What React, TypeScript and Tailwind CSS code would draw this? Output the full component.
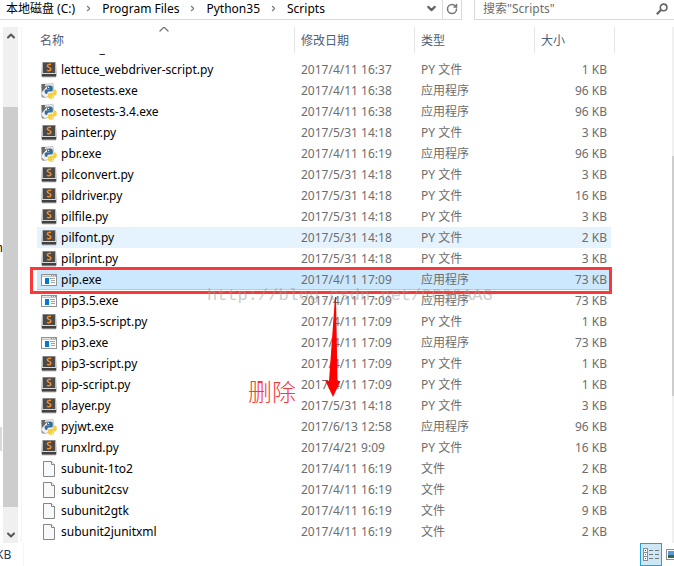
import React from 'react';
import { ChevronDown, ChevronUp, ChevronRight, RotateCw } from 'lucide-react';

type Kind = 'sublime' | 'python' | 'window' | 'blank';

interface FileRow {
  name: string;
  date: string;
  type: string;
  size: string;
  kind: Kind;
}

const files: FileRow[] = [
  { name: 'lettuce_webdriver-script.py', date: '2017/4/11 16:37', type: 'PY 文件', size: '1 KB', kind: 'sublime' },
  { name: 'nosetests.exe', date: '2017/4/11 16:38', type: '应用程序', size: '96 KB', kind: 'python' },
  { name: 'nosetests-3.4.exe', date: '2017/4/11 16:38', type: '应用程序', size: '96 KB', kind: 'python' },
  { name: 'painter.py', date: '2017/5/31 14:18', type: 'PY 文件', size: '3 KB', kind: 'sublime' },
  { name: 'pbr.exe', date: '2017/4/11 16:19', type: '应用程序', size: '96 KB', kind: 'python' },
  { name: 'pilconvert.py', date: '2017/5/31 14:18', type: 'PY 文件', size: '3 KB', kind: 'sublime' },
  { name: 'pildriver.py', date: '2017/5/31 14:18', type: 'PY 文件', size: '16 KB', kind: 'sublime' },
  { name: 'pilfile.py', date: '2017/5/31 14:18', type: 'PY 文件', size: '3 KB', kind: 'sublime' },
  { name: 'pilfont.py', date: '2017/5/31 14:18', type: 'PY 文件', size: '2 KB', kind: 'sublime' },
  { name: 'pilprint.py', date: '2017/5/31 14:18', type: 'PY 文件', size: '3 KB', kind: 'sublime' },
  { name: 'pip.exe', date: '2017/4/11 17:09', type: '应用程序', size: '73 KB', kind: 'window' },
  { name: 'pip3.5.exe', date: '2017/4/11 17:09', type: '应用程序', size: '73 KB', kind: 'window' },
  { name: 'pip3.5-script.py', date: '2017/4/11 17:09', type: 'PY 文件', size: '1 KB', kind: 'sublime' },
  { name: 'pip3.exe', date: '2017/4/11 17:09', type: '应用程序', size: '73 KB', kind: 'window' },
  { name: 'pip3-script.py', date: '2017/4/11 17:09', type: 'PY 文件', size: '1 KB', kind: 'sublime' },
  { name: 'pip-script.py', date: '2017/4/11 17:09', type: 'PY 文件', size: '1 KB', kind: 'sublime' },
  { name: 'player.py', date: '2017/5/31 14:18', type: 'PY 文件', size: '3 KB', kind: 'sublime' },
  { name: 'pyjwt.exe', date: '2017/6/13 12:58', type: '应用程序', size: '96 KB', kind: 'python' },
  { name: 'runxlrd.py', date: '2017/4/21 9:09', type: 'PY 文件', size: '16 KB', kind: 'sublime' },
  { name: 'subunit-1to2', date: '2017/4/11 16:19', type: '文件', size: '2 KB', kind: 'blank' },
  { name: 'subunit2csv', date: '2017/4/11 16:19', type: '文件', size: '2 KB', kind: 'blank' },
  { name: 'subunit2gtk', date: '2017/4/11 16:19', type: '文件', size: '9 KB', kind: 'blank' },
  { name: 'subunit2junitxml', date: '2017/4/11 16:19', type: '文件', size: '2 KB', kind: 'blank' },
];

const FileIcon = ({ kind }: { kind: Kind }) => {
  if (kind === 'sublime') {
    return (
      <svg className="size-4 shrink-0" viewBox="0 0 16 16">
        <path d="M1 0h14l1 14-1.500 1.500h-13L0 14z" fill="#bdbdbd" />
        <path d="M2 0.500h12v10.500H2z" fill="#4a4a4a" />
        <path d="M1 11h14v1H1z" fill="#d8d8d8" />
        <path d="M1 12h14v2.500H1z" fill="#404040" />
        <path d="M10 2.500C8 2 6.300 2.700 6.300 4s3.600 1.400 3.600 2.900S8 9 6 8.400" fill="none" stroke="#f2912f" strokeWidth="1.500" />
      </svg>
    );
  }
  if (kind === 'python') {
    return (
      <svg className="size-4 shrink-0" viewBox="0 0 16 16">
        <path d="M0.500 1.500 12 0.500l1.500 11L4 14.500l-3.500-1z" fill="#f1f1f1" stroke="#c6c6c6" />
        <path d="M0.500 1h4L3.500 3.500 7 2 1 9z" fill="#666" />
        <path d="M1 11.500 4 14.500H1z" fill="#999" />
        <path d="M6 6V4.600C6 3.200 7.200 2.600 8.900 2.600s2.900.6 2.900 2v2.300c0 1.200-.8 1.700-1.800 1.700H8C6.800 8.600 6.200 9.500 6.200 11H5.500C4.200 11 3.600 9.900 3.600 8.500S4.400 6.300 5.600 6.300h3.300V6z" fill="#346f9f" />
        <path d="M12.700 6.600h.8c1.500 0 2.300 1.200 2.300 3s-.9 2.900-2.200 2.900H10.500v.5H13v.9c0 1.300-1.300 1.800-3 1.800s-3-.6-3-1.900v-2.100c0-1.300.9-1.800 1.900-1.800h1.900c1.200 0 1.900-.8 1.900-2z" fill="#f7cf3c" />
        <circle cx="7.500" cy="4.400" r="0.600" fill="#fff" />
        <circle cx="11.400" cy="14.200" r="0.600" fill="#fff" />
      </svg>
    );
  }
  if (kind === 'window') {
    return (
      <svg className="size-4 shrink-0" viewBox="0 0 16 16" shapeRendering="crispEdges">
        <rect x="0" y="2" width="16" height="12" fill="#8f9396" />
        <rect x="1" y="5" width="14" height="8" fill="#fff" />
        <path d="M1 3h14v1H1z" fill="#e4e6e8" />
        <path d="M10 3h1v1h-1zM12 3h1v1h-1zM14 3h1v1h-1z" fill="#8f9396" />
        <path d="M1 4h14v1H1z" fill="#c2c5c8" />
        <rect x="4" y="6" width="4" height="6" fill="#0078d7" />
        <path d="M9 6h5v1H9zM10 8h4v1h-4zM10 10h4v1h-4z" fill="#a2a2a2" />
      </svg>
    );
  }
  return (
    <svg className="size-4 shrink-0" viewBox="0 0 16 16">
      <path d="M2.500 0.500h8l3 3v12h-11z" fill="#f8f9fa" stroke="#868686" />
      <path d="M10.500 0.500v3h3" fill="#fff" stroke="#868686" />
    </svg>
  );
};

const Crumb = ({ label }: { label: string }) => (
  <a href="#" className="whitespace-nowrap text-black">{label}</a>
);

const AddressBar = () => (
  <div className="flex h-5 shrink-0 text-xs">
    <nav className="flex grow items-center gap-[9px] border-b border-[#d9d9d9] pb-0.5 pl-1.5">
      <Crumb label="本地磁盘 (C:)" />
      <ChevronRight size={9} strokeWidth={3} className="text-[#777]" />
      <Crumb label="Program Files" />
      <ChevronRight size={9} strokeWidth={3} className="text-[#777]" />
      <Crumb label="Python35" />
      <ChevronRight size={9} strokeWidth={3} className="text-[#777]" />
      <Crumb label="Scripts" />
      <button aria-label="Previous locations" className="mr-1 ml-auto text-[#666]">
        <ChevronDown size={13} strokeWidth={4} />
      </button>
    </nav>
    <button aria-label="Refresh" className="flex w-5 items-center justify-center border-x border-b border-[#d9d9d9] pb-0.5 text-[#777]">
      <RotateCw size={12} strokeWidth={3} />
    </button>
    <label className="ml-3 flex w-[200px] items-center border-b border-l border-[#d9d9d9] pr-1.5 pb-0.5 pl-2">
      <input aria-label="Search" placeholder={'搜索"Scripts"'} className="min-w-0 grow placeholder:text-[#6d6d6d] outline-none" />
      <svg className="size-3 shrink-0" viewBox="0 0 12 12" fill="none" stroke="#666" strokeWidth="1.600">
        <circle cx="7.600" cy="4.400" r="3.300" />
        <path d="M5.200 6.800 0.800 11.200" strokeWidth="2.200" />
      </svg>
    </label>
  </div>
);

const TreePane = () => (
  <div className="flex shrink-0 border-r border-[#f5f5f5] pr-[3px]">
    <div className="flex w-[3px] flex-col overflow-hidden">
      <span className="mt-[211px] flex h-5 justify-end text-xs leading-5">n</span>
      <span className="mt-[169px] h-6 w-0.5 bg-[#d9d9d9]" />
    </div>
    <div className="flex w-[15px] flex-col items-center bg-[#f0f0f0] text-[#555]">
      <ChevronUp size={12} strokeWidth={4} className="mt-[3px] mb-[5px] shrink-0" />
      <div className="mt-[60px] w-full grow bg-[#cdcdcd]" />
      <ChevronDown size={12} strokeWidth={4} className="mt-[22px] mb-0.5 shrink-0" />
    </div>
  </div>
);

const Annotations = () => (
  <>
    <div className="pointer-events-none absolute top-[240px] left-2 h-[27px] w-[582px] border-[3px] border-[#fb3838]" />
    <span className="pointer-events-none absolute top-[256px] left-[185px] font-['Liberation_Mono',monospace] text-[17px] whitespace-nowrap text-[#999]/50">
      http://blog.csdn.net/CCGGAAG
    </span>
    <svg className="pointer-events-none absolute top-[270px] left-[303px] h-[100px] w-4" viewBox="0 0 16 100">
      <path d="M10 0h1l1.500 84h3L8 100 0 83l4 1z" fill="#f00" />
    </svg>
    <span className="pointer-events-none absolute top-[348px] left-[226px] font-['Noto_Sans_CJK_SC',sans-serif] text-2xl font-light text-[#fb3838]">
      删除
    </span>
  </>
);

const rowClass = (name: string) => {
  if (name === 'pip.exe') return 'h-[21px] [&>td]:bg-[#cce8ff] [&>td]:shadow-[inset_0_1px_#99d1ff,inset_0_-1px_#99d1ff]';
  if (name === 'pilfont.py') return 'h-[21px] [&>td]:bg-[#e5f3ff]';
  return 'h-[21px]';
};

const FileList = () => (
  <div className="relative min-w-0 grow overflow-hidden pl-[15px]">
    <table className="w-[578px] table-fixed border-separate border-spacing-0 text-xs text-[#6d6d6d]">
      <colgroup>
        <col className="w-[258px]" />
        <col className="w-[120px]" />
        <col className="w-[120px]" />
        <col className="w-[76px]" />
        <col className="w-1" />
      </colgroup>
      <thead>
        <tr className="h-[26px] text-left text-[#4c607a]">
          <th className="relative border-r border-[#e5e5e5] p-0 pt-0.5 pl-[3px] font-normal">
            名称
            <ChevronUp size={16} strokeWidth={2} className="absolute -top-1.5 left-[119px] text-[#777]" />
          </th>
          <th className="border-r border-[#e5e5e5] p-0 pt-0.5 pl-1.5 font-normal">修改日期</th>
          <th className="border-r border-[#e5e5e5] p-0 pt-0.5 pl-1.5 font-normal">类型</th>
          <th colSpan={2} className="border-r border-[#e5e5e5] p-0 pt-0.5 pl-1.5 font-normal">大小</th>
        </tr>
      </thead>
      <tbody>
        {/* tail of the row scrolled under the header */}
        <tr>
          <td className="p-0">
            <div className="flex h-1.5 items-end overflow-hidden pl-6 leading-[21px] text-black">lettuce_webdriver.exe</div>
          </td>
          <td className="p-0">
            <div className="flex h-1.5 items-end overflow-hidden pl-1.5 leading-[21px]">2017/4/11 16:37</div>
          </td>
        </tr>
        {files.map((file) => (
          <tr key={file.name} className={rowClass(file.name)}>
            <td className="p-0 pl-1">
              <div className="flex items-center gap-1 text-black">
                <FileIcon kind={file.kind} />
                {file.name}
              </div>
            </td>
            <td className="p-0 pl-1.5">{file.date}</td>
            <td className="p-0 pl-1.5">{file.type}</td>
            <td className="p-0 pr-1 text-right">{file.size}</td>
          </tr>
        ))}
      </tbody>
    </table>
    <Annotations />
  </div>
);

const StatusBar = () => (
  <div className="flex h-[23px] items-stretch overflow-hidden text-xs">
    <div className="-ml-1 flex w-7 items-center border-r border-[#f5f5f5] text-[#1e395b]">KB</div>
    <div className="ml-auto flex gap-1">
      <button aria-label="Details view" className="flex w-[22px] items-center justify-center border border-[#26a0da] bg-[#cce8f6]">
        <svg className="h-[13px] w-4" viewBox="0 0 16 13" shapeRendering="crispEdges">
          <path d="M0.500 0.500h4v12h-4zM0.500 4.500h4M0.500 8.500h4" fill="#fff" stroke="#8c8c8c" />
          <path d="M6 2.500h4M12 2.500h4M6 6.500h4M12 6.500h4M6 10.500h4M12 10.500h4" stroke="#777" />
          <path d="M2 2h1v1H2z" fill="#333" />
          <path d="M2 6h1v1H2z" fill="#2a7be0" />
          <path d="M2 10h1v1H2z" fill="#e02020" />
        </svg>
      </button>
      <button aria-label="Large icons view" className="flex w-2 items-center overflow-hidden">
        <svg className="h-[11px] w-4 shrink-0" viewBox="0 0 16 11" shapeRendering="crispEdges">
          <rect x="0.500" y="0.500" width="15" height="10" fill="#fff" stroke="#8c8c8c" />
          <rect x="2" y="2" width="12" height="4" fill="#5b9bd5" />
          <rect x="2" y="6" width="12" height="3" fill="#2e6b4f" />
        </svg>
      </button>
    </div>
  </div>
);

export default function App() {
  return (
    <div className="flex min-h-screen flex-col bg-white font-['Noto_Sans','Noto_Sans_CJK_SC',sans-serif]">
      <AddressBar />
      <div className="mt-[7px] flex grow">
        <TreePane />
        <FileList />
        <div className="flex w-0.5 flex-col bg-[#f0f0f0]">
          <div className="mt-[129px] h-60 bg-[#cdcdcd]" />
        </div>
      </div>
      <StatusBar />
    </div>
  );
}
